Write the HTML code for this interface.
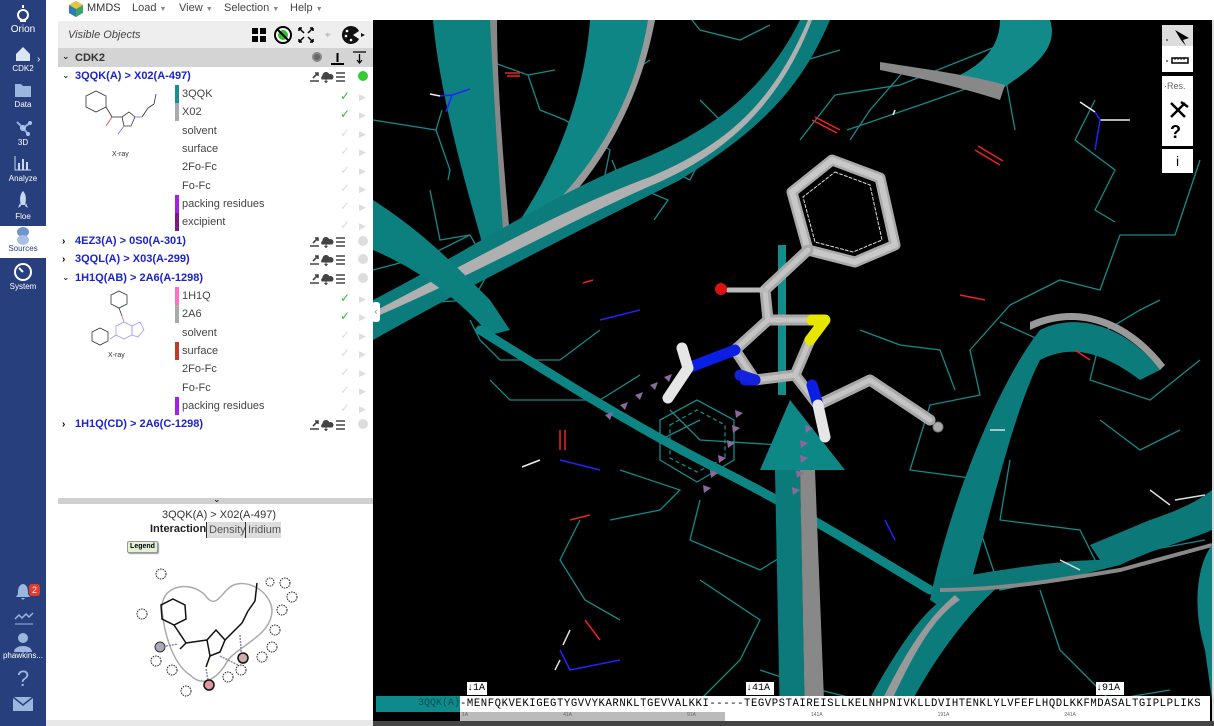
<!DOCTYPE html>
<html><head><meta charset="utf-8"><style>
*{margin:0;padding:0;box-sizing:border-box}
body{width:1214px;height:726px;overflow:hidden;background:#fff;font-family:"Liberation Sans",sans-serif;position:relative}
.a{position:absolute;white-space:nowrap}
#side{left:0;top:0;width:46px;height:726px;background:#283f7d}
.si{position:absolute;left:0;width:46px;text-align:center;color:#fff;font-size:8px}
.hdr{font-size:11px;font-weight:bold;color:#1b22d0}
.sub{font-size:11px;color:#444}
.bar{position:absolute;left:175px;width:4px;height:18px}
.ck{color:#33bb33;font-size:12px}
.ckg{color:#ddd;font-size:12px}
.tri{color:#ddd;font-size:9px}
</style></head><body>
<div id="side" class="a">
 <div class="si" style="top:4px"><svg width="16" height="20" viewBox="0 0 16 20"><path d="M8 1 L8 4" stroke="#fff" stroke-width="2"/><circle cx="8" cy="11" r="5" fill="none" stroke="#fff" stroke-width="2"/><path d="M5 17 H11" stroke="#fff" stroke-width="2"/></svg><div style="font-size:10px;margin-top:-2px">Orion</div></div>
 <div class="si" style="top:46px"><svg width="18" height="16"><path d="M2 8 L9 1 L16 8 V15 H2Z" fill="#dbe6f5"/></svg><div>CDK2</div></div>
 <div class="a" style="left:37px;top:54px;color:#fff;font-size:10px">›</div>
 <div class="si" style="top:82px"><svg width="18" height="16"><path d="M1 2 H7 L9 4 H17 V15 H1Z" fill="#9bb7e0"/></svg><div>Data</div></div>
 <div class="si" style="top:118px"><svg width="20" height="18"><line x1="4" y1="4" x2="10" y2="10" stroke="#8fb0e0" stroke-width="2"/><line x1="10" y1="10" x2="17" y2="5" stroke="#8fb0e0" stroke-width="2"/><line x1="10" y1="10" x2="15" y2="16" stroke="#8fb0e0" stroke-width="2"/><circle cx="10" cy="10" r="3" fill="#a8c4ea"/><circle cx="17" cy="5" r="2" fill="#a8c4ea"/><circle cx="15" cy="16" r="2" fill="#a8c4ea"/></svg><div>3D</div></div>
 <div class="si" style="top:154px"><svg width="20" height="18"><path d="M2 2 V16 H18" stroke="#c8d8f0" fill="none"/><rect x="5" y="9" width="2" height="7" fill="#c8d8f0"/><rect x="9" y="5" width="2" height="11" fill="#c8d8f0"/><rect x="13" y="8" width="2" height="8" fill="#c8d8f0"/></svg><div>Analyze</div></div>
 <div class="si" style="top:190px"><svg width="14" height="20"><path d="M7 1 C11 5 10 12 9 15 H5 C4 12 3 5 7 1Z M4 13 L2 18 L5 16Z M10 13 L12 18 L9 16Z" fill="#c8d8f0"/></svg><div>Floe</div></div>
 <div class="si" style="top:226px;height:32px;background:#fff;color:#2a3f7e"><svg width="16" height="20"><ellipse cx="8" cy="6" rx="6" ry="5" fill="#6f94cf"/><ellipse cx="8" cy="14" rx="6" ry="5" fill="#a9c0e4"/></svg><div style="margin-top:-4px">Sources</div></div>
 <div class="si" style="top:262px"><svg width="20" height="20"><circle cx="10" cy="10" r="8" fill="none" stroke="#fff" stroke-width="2"/><line x1="10" y1="10" x2="6" y2="6" stroke="#fff" stroke-width="2"/></svg><div style="margin-top:-2px">System</div></div>
 <div class="a" style="left:14px;top:583px"><svg width="18" height="18"><path d="M9 1 C4 2 4 7 4 11 L2 14 H16 L14 11 C14 7 14 2 9 1Z M7 15 H11 L9 17Z" fill="#9bb7e0"/></svg></div>
 <div class="a" style="left:29px;top:584px;width:11px;height:12px;background:#e8392a;border-radius:3px;color:#fff;font-size:9px;text-align:center;line-height:12px">2</div>
 <div class="a" style="left:14px;top:611px"><svg width="20" height="14"><path d="M1 8 L5 4 L8 7 L12 3 L15 6 L19 2" stroke="#9bb7e0" fill="none" stroke-width="1.5"/><line x1="1" y1="13" x2="19" y2="13" stroke="#9bb7e0"/></svg></div>
 <div class="si" style="top:632px"><svg width="20" height="20"><circle cx="10" cy="6" r="5" fill="#9bb7e0"/><path d="M1 20 C1 12 19 12 19 20Z" fill="#9bb7e0"/></svg><div style="margin-top:-3px">phawkins...</div></div>
 <div class="si" style="top:666px;font-size:22px;color:#9bb7e0">?</div>
 <div class="a" style="left:13px;top:697px"><svg width="20" height="14"><rect width="20" height="14" fill="#9bb7e0"/><path d="M0 0 L10 8 L20 0" stroke="#283f7d" fill="none" stroke-width="1.5"/></svg></div>
</div>
<!-- menu -->
<div class="a" style="left:68px;top:1px"><svg width="16" height="16"><polygon points="8,0 15,4 15,12 8,16 1,12 1,4" fill="#3aa56b"/><polygon points="8,0 15,4 8,8 1,4" fill="#e6c43a"/><polygon points="1,4 8,8 8,16 1,12" fill="#2c7db3"/></svg></div>
<div class="a" style="left:87px;top:2px;font-size:11px;color:#333">MMDS</div>
<div class="a" style="left:132px;top:2px;font-size:11px;color:#444">Load <span style="font-size:7px;color:#888">▼</span></div>
<div class="a" style="left:179px;top:2px;font-size:11px;color:#444">View <span style="font-size:7px;color:#888">▼</span></div>
<div class="a" style="left:224px;top:2px;font-size:11px;color:#444">Selection <span style="font-size:7px;color:#888">▼</span></div>
<div class="a" style="left:290px;top:2px;font-size:11px;color:#444">Help <span style="font-size:7px;color:#888">▼</span></div>
<!-- panel header -->
<div class="a" style="left:58px;top:21px;width:315px;height:27px;background:#eeeeee"></div>
<div class="a" style="left:68px;top:29px;font-size:11px;font-style:italic;color:#444">Visible Objects</div>
<div class="a" style="left:252px;top:28px"><svg width="14" height="14"><rect x="0" y="0" width="6" height="6"/><rect x="8" y="0" width="6" height="6"/><rect x="0" y="8" width="6" height="6"/><rect x="8" y="8" width="6" height="6"/></svg></div>
<div class="a" style="left:274px;top:26px"><svg width="18" height="18"><circle cx="9" cy="9" r="8" fill="#fff" stroke="#000" stroke-width="2"/><circle cx="9" cy="9" r="5" fill="#3b3"/><line x1="3" y1="3" x2="15" y2="15" stroke="#000" stroke-width="2"/></svg></div>
<div class="a" style="left:298px;top:27px"><svg width="16" height="16" stroke="#000" stroke-width="1.5" fill="none"><path d="M1 1 L6 6 M15 1 L10 6 M1 15 L6 10 M15 15 L10 10 M1 1 H4 M1 1 V4 M15 1 H12 M15 1 V4 M1 15 H4 M1 15 V12 M15 15 H12 M15 15 V12"/></svg></div>
<div class="a" style="left:325px;top:30px;color:#aaa;font-size:10px">⌖</div>
<div class="a" style="left:341px;top:25px"><svg width="26" height="20"><path d="M10 1 A9 9 0 1 0 18 14 L12 10 L18 6 A9 9 0 0 0 10 1Z" fill="#111"/><circle cx="6" cy="6" r="1.3" fill="#fff"/><circle cx="5" cy="11" r="1.3" fill="#fff"/><circle cx="10" cy="15" r="1.3" fill="#fff"/><path d="M20 8 L24 10 L20 12Z" fill="#111"/></svg></div>
<div class="a" style="left:58px;top:48px;width:315px;height:19px;background:#d4d4d4"></div>
<div class="a" style="left:62px;top:51px;font-size:9px">⌄</div>
<div class="a" style="left:75px;top:52px;font-size:11px;font-weight:bold;color:#333">CDK2</div>
<div class="a" style="left:312px;top:52px;width:10px;height:10px;border-radius:50%;background:#666;border:2px solid #888"></div>
<svg class="a" style="left:330px;top:50px" width="38" height="16" stroke="#000" stroke-width="2"><path d="M1 14 H14 M7.5 12 V3"/><path d="M23 2 H36 M29.5 4 V13 M27 10 L29.5 13 L32 10" fill="none" stroke-width="1.3"/></svg>

<!-- headers -->
<div class="a" style="left:62px;top:70px;font-size:9px">⌄</div><div class="a hdr" style="left:75px;top:70px">3QQK(A) &gt; X02(A-497)</div>
<div class="a" style="left:62px;top:236px;font-size:10px;font-weight:bold">›</div><div class="a hdr" style="left:75px;top:235px">4EZ3(A) &gt; 0S0(A-301)</div>
<div class="a" style="left:62px;top:254px;font-size:10px;font-weight:bold">›</div><div class="a hdr" style="left:75px;top:253px">3QQL(A) &gt; X03(A-299)</div>
<div class="a" style="left:62px;top:272px;font-size:9px">⌄</div><div class="a hdr" style="left:75px;top:272px">1H1Q(AB) &gt; 2A6(A-1298)</div>
<div class="a" style="left:62px;top:419px;font-size:10px;font-weight:bold">›</div><div class="a hdr" style="left:75px;top:418px">1H1Q(CD) &gt; 2A6(C-1298)</div>
<!-- header icons -->
<svg width="0" height="0" style="position:absolute"><defs><g id="hi"><path d="M1 11 H10 M4 8 L9 3 M6 3 H9 V6" stroke="#444" stroke-width="1.6" fill="none"/><path d="M14 6 A3 3 0 0 1 20 5 A2.5 2.5 0 0 1 23 9 H13 A2 2 0 0 1 14 6Z M17 9 V12 M15.5 11 L17 12.5 L18.5 11" fill="#444" stroke="#444"/><path d="M27 3 H36 M27 7 H36 M27 11 H36" stroke="#444" stroke-width="1.6"/></g></defs></svg>
<svg class="a" style="left:309px;top:70px" width="38" height="14"><use href="#hi"/></svg>
<div class="a" style="left:358px;top:71px;width:10px;height:10px;border-radius:50%;background:#3c3"></div>
<svg class="a" style="left:309px;top:235px" width="38" height="14"><use href="#hi"/></svg><div class="a" style="left:358px;top:236px;width:10px;height:10px;border-radius:50%;background:#ddd"></div>
<svg class="a" style="left:309px;top:253px" width="38" height="14"><use href="#hi"/></svg><div class="a" style="left:358px;top:254px;width:10px;height:10px;border-radius:50%;background:#ddd"></div>
<svg class="a" style="left:309px;top:272px" width="38" height="14"><use href="#hi"/></svg><div class="a" style="left:358px;top:273px;width:10px;height:10px;border-radius:50%;background:#ddd"></div>
<svg class="a" style="left:309px;top:418px" width="38" height="14"><use href="#hi"/></svg><div class="a" style="left:358px;top:419px;width:10px;height:10px;border-radius:50%;background:#ddd"></div>

<!-- sub rows 3QQK -->
<div class="bar" style="top:85px;background:#1b8d8b"></div><div class="bar" style="top:103px;background:#aaa"></div>
<div class="bar" style="top:195px;background:#a020f0"></div><div class="bar" style="top:213px;background:#7a1a7a"></div>
<div class="a sub" style="left:182px;top:88px">3QQK</div>
<div class="a sub" style="left:182px;top:106px">X02</div>
<div class="a sub" style="left:182px;top:125px">solvent</div>
<div class="a sub" style="left:182px;top:143px">surface</div>
<div class="a sub" style="left:182px;top:161px">2Fo-Fc</div>
<div class="a sub" style="left:182px;top:180px">Fo-Fc</div>
<div class="a sub" style="left:182px;top:198px">packing residues</div>
<div class="a sub" style="left:182px;top:216px">excipient</div>
<div class="a" style="left:340px;top:87px;line-height:18.4px;text-align:center;width:10px"><span class="ck">✓</span><br><span class="ck">✓</span><br><span class="ckg">✓</span><br><span class="ckg">✓</span><br><span class="ckg">✓</span><br><span class="ckg">✓</span><br><span class="ckg">✓</span><br><span class="ckg">✓</span></div>
<div class="a tri" style="left:359px;top:88px;line-height:18.4px">▶<br>▶<br>▶<br>▶<br>▶<br>▶<br>▶<br>▶</div>
<!-- sub rows 1H1Q -->
<div class="bar" style="top:287px;background:#ff6ec7"></div><div class="bar" style="top:305px;background:#aaa"></div>
<div class="bar" style="top:342px;background:#c0392b"></div><div class="bar" style="top:397px;background:#a020f0"></div>
<div class="a sub" style="left:182px;top:290px">1H1Q</div>
<div class="a sub" style="left:182px;top:308px">2A6</div>
<div class="a sub" style="left:182px;top:327px">solvent</div>
<div class="a sub" style="left:182px;top:345px">surface</div>
<div class="a sub" style="left:182px;top:363px">2Fo-Fc</div>
<div class="a sub" style="left:182px;top:382px">Fo-Fc</div>
<div class="a sub" style="left:182px;top:400px">packing residues</div>
<div class="a" style="left:340px;top:289px;line-height:18.4px;text-align:center;width:10px"><span class="ck">✓</span><br><span class="ck">✓</span><br><span class="ckg">✓</span><br><span class="ckg">✓</span><br><span class="ckg">✓</span><br><span class="ckg">✓</span><br><span class="ckg">✓</span></div>
<div class="a tri" style="left:359px;top:290px;line-height:18.4px">▶<br>▶<br>▶<br>▶<br>▶<br>▶<br>▶</div>
<!-- 2D structures -->
<svg class="a" style="left:80px;top:86px" width="80" height="75" stroke="#333" fill="none" stroke-width="0.8">
 <polygon points="16,5 26,10 26,21 16,26 6,21 6,10"/><line x1="26" y1="21" x2="32" y2="31"/><line x1="32" y1="31" x2="26" y2="40" stroke="#f33"/><line x1="32" y1="31" x2="42" y2="31"/>
 <polygon points="42,31 49,26 55,31 51,40 44,40"/><line x1="55" y1="31" x2="62" y2="31" stroke="#66f"/><line x1="62" y1="31" x2="68" y2="22"/><line x1="68" y1="22" x2="74" y2="18"/><line x1="74" y1="18" x2="76" y2="8"/><line x1="44" y1="40" x2="38" y2="48" stroke="#66f"/>
 <text x="32" y="70" font-size="7" fill="#333" stroke="none" font-family="Liberation Sans">X-ray</text></svg>
<svg class="a" style="left:88px;top:288px" width="70" height="72" stroke="#333" fill="none" stroke-width="0.8">
 <polygon points="31,3 39,7 39,16 31,20 23,16 23,7"/><line x1="31" y1="20" x2="34" y2="28"/><line x1="34" y1="28" x2="36" y2="34" stroke="#f66"/>
 <polygon points="36,34 44,38 44,47 36,51 28,47 28,38" stroke="#99f"/><polygon points="44,38 52,34 56,42 50,49 44,47" stroke="#99f"/><line x1="28" y1="47" x2="22" y2="51" stroke="#99f"/>
 <polygon points="12,40 20,44 20,53 12,57 4,53 4,44"/>
 <text x="20" y="69" font-size="7" fill="#333" stroke="none" font-family="Liberation Sans">X-ray</text></svg>

<!-- collapse bar -->
<div class="a" style="left:58px;top:498px;width:315px;height:6px;background:#d0d0d0"></div>
<div class="a" style="left:213px;top:494px;font-size:9px">⌄</div>
<div class="a" style="left:162px;top:509px;font-size:11px;color:#333">3QQK(A) &gt; X02(A-497)</div>
<div class="a" style="left:150px;top:523px;font-size:11px;font-weight:bold;color:#222">Interaction</div>
<div class="a" style="left:206px;top:522px;width:75px;height:16px;background:#ddd"></div>
<div class="a" style="left:206px;top:522px;height:16px;border-left:1px solid #333;padding-left:2px;font-size:11px;color:#555;line-height:16px">Density</div>
<div class="a" style="left:245px;top:522px;height:16px;border-left:1px solid #333;padding-left:2px;font-size:11px;color:#555;line-height:16px">Iridium</div>
<div class="a" style="left:127px;top:541px;width:31px;height:12px;background:#e3f0d8;border:1px solid #999;border-radius:2px;font-size:7px;font-weight:bold;text-align:center;line-height:10px;box-shadow:1px 1px 1px #999">Legend</div>
<!-- interaction diagram -->
<svg class="a" style="left:130px;top:565px" width="180" height="135" fill="none">
 <path d="M32 45 C30 20 60 15 75 30 C85 45 90 30 100 22 C115 12 140 25 142 45 C142 70 110 80 98 95 C90 110 75 125 60 110 C45 100 35 75 32 45Z" stroke="#aaa" stroke-width="1.5"/>
 <g stroke="#111" stroke-width="1.5"><polygon points="43,34 55,40 56,54 44,60 32,54 31,40"/><line x1="44" y1="60" x2="56" y2="78"/><line x1="56" y1="78" x2="50" y2="84"/><line x1="56" y1="78" x2="77" y2="75"/>
 <polygon points="77,75 86,65 95,75 90,87 80,91"/><line x1="95" y1="75" x2="112" y2="58"/><line x1="112" y1="58" x2="118" y2="46"/><line x1="118" y1="46" x2="125" y2="36"/><line x1="125" y1="36" x2="127" y2="18"/><line x1="80" y1="91" x2="76" y2="102"/></g>
 <path d="M30 82 L48 79 M90 91 L112 102 M76 104 L79 120 M110 70 L112 98" stroke="#88a" stroke-dasharray="2 1" stroke-width="1.5"/>
 <g stroke="#222" stroke-dasharray="1.5 1" fill="#fff"><circle cx="31" cy="9" r="5"/><circle cx="12" cy="49" r="5"/><circle cx="26" cy="96" r="5"/><circle cx="42" cy="105" r="5"/><circle cx="56" cy="126" r="5"/><circle cx="98" cy="112" r="5"/><circle cx="111" cy="105" r="5"/><circle cx="132" cy="92" r="5"/><circle cx="142" cy="82" r="5"/><circle cx="155" cy="18" r="5"/><circle cx="162" cy="32" r="5"/><circle cx="152" cy="45" r="5"/><circle cx="145" cy="65" r="5"/><circle cx="140" cy="17" r="4"/></g>
 <circle cx="30" cy="82" r="5" fill="#aab" stroke="#333"/><circle cx="79" cy="120" r="5" fill="#d99" stroke="#111" stroke-width="1.5"/><circle cx="113" cy="93" r="5" fill="#caa" stroke="#111" stroke-width="1.5"/>
</svg>
<div class="a" style="left:46px;top:720px;width:327px;height:6px;background:#e8e8e8"></div>

<!-- viewer -->
<div class="a" style="left:373px;top:20px;width:841px;height:706px;background:#000;overflow:hidden">
<svg width="841" height="706" viewBox="373 20 841 706">
 <g stroke="#148a8a" stroke-width="1.3" fill="none">
  <path d="M440 20 L445 45 L528 75 L540 110 L565 120 L610 150 L598 210 M528 75 L555 70"/>
  <path d="M373 120 L436 130 L442 110 M436 130 L450 170 L448 180"/>
  <path d="M430 190 L440 240 L470 235 L490 270 L473 300 L380 305"/>
  <path d="M470 235 L430 255 L373 270"/>
  <path d="M620 180 L668 200 L654 220 M620 180 L612 160"/>
  <path d="M650 60 L620 80 L610 75"/>
  <path d="M680 5 L700 30 L740 40 L770 25"/>
  <path d="M700 100 L720 120 L690 180 L680 175"/>
  <path d="M800 140 L835 95 L900 85 L1000 45"/>
  <path d="M840 50 L790 65"/>
  <path d="M905 70 L870 110 L850 140"/>
  <path d="M847 130 L920 105 L1005 75 L1015 130"/>
  <path d="M1095 100 L1075 140 L1115 170 L1095 210 L1115 222"/>
  <path d="M1200 160 L1175 235 L1120 235 L1100 290 L1060 280 L1010 305 L970 350 L980 395 L930 405 L910 470 L985 480"/>
  <path d="M1000 322 L1040 340 L1090 340 L1140 310 L1160 300"/>
  <path d="M1100 340 L1090 380 L1150 400 L1200 360"/>
  <path d="M860 330 L900 345 L940 350 L955 390"/>
  <path d="M670 410 L700 440 L780 445 L790 420"/>
  <path d="M620 470 L680 490 L660 510 L610 520"/>
  <path d="M700 500 L690 540 L760 570 L800 545"/>
  <path d="M470 320 L480 340 L500 360 L560 360 L600 330"/>
  <path d="M490 380 L510 400 L600 400 L640 375"/>
  <path d="M600 400 L620 420 L660 440 L700 420"/>
  <path d="M580 520 L560 560 L585 600 L620 620"/>
  <path d="M700 580 L760 620 L740 660 L700 700"/>
  <path d="M760 670 L820 690 L860 700"/>
  <path d="M1010 460 L1000 520 L1080 530 L1100 570"/>
  <path d="M1040 590 L1060 650 L1110 700 L1170 690"/>
  <path d="M980 530 L1000 590 L1050 580"/>
  <path d="M1120 560 L1150 550 L1205 540"/>
  <path d="M1100 420 L1140 450 L1180 430"/>
  <polygon points="660,420 697,400 734,420 734,460 697,482 660,460"/>
  <polygon points="670,425 697,410 725,425 725,458 697,472 670,458" stroke-dasharray="4 3"/>
 </g>
 <!-- ribbons -->
 <path d="M433 20 L495 20 C495 100 505 200 512 260 L490 270 C470 200 440 100 433 20Z" fill="#0d8080"/>
 <path d="M490 20 L497 20 C497 100 507 200 512 260 L506 263 C500 200 494 100 490 20Z" fill="#888"/>
 <path d="M590 20 L655 20 C640 90 600 170 530 230 L520 220 C560 160 585 90 590 20Z" fill="#0e8686"/>
 <path d="M648 20 L655 20 C642 90 608 170 535 233 L530 228 C595 170 635 100 648 20Z" fill="#999"/>
 <path d="M373 300 C470 250 560 190 640 160 C700 135 760 100 800 20 L830 20 C800 90 760 130 680 180 C600 220 480 280 373 340Z" fill="#0b7b7b"/>
 <path d="M373 312 C470 262 560 210 650 177 C720 147 770 110 808 20 L812 20 C778 110 718 158 650 186 C560 226 480 272 373 318Z" fill="#b0b0b0"/>
 <path d="M373 200 C420 230 450 260 490 300 L510 330 L490 335 C460 300 420 270 373 250Z" fill="#0c7f7f"/>
 <path d="M1000 20 L1050 20 C1060 50 1030 70 1000 90 L960 75 C990 60 1000 40 1000 20Z" fill="#138a8a"/>
 <path d="M880 70 C930 80 970 90 1000 100 L1005 85 C970 75 930 70 880 62Z" fill="#888"/>
 <path d="M480 330 C560 380 640 430 720 470 C800 510 880 560 930 590" stroke="#0e8585" stroke-width="9" fill="none" stroke-linecap="round"/>
 <path d="M930 600 C950 500 1000 380 1040 330 C1080 310 1130 330 1160 370 L1140 380 C1100 350 1070 345 1040 360 C1010 420 990 520 960 620Z" fill="#0b7b7b"/>
 <path d="M1030 330 C1080 305 1130 330 1160 370 L1165 365 C1130 320 1080 300 1030 322Z" fill="#999"/>
 <path d="M855 726 C900 640 930 600 960 590 L1000 585 C960 620 920 680 900 726Z" fill="#0b7b7b"/>
 <path d="M880 726 C910 660 930 620 960 600 L955 595 C925 620 900 660 870 726Z" fill="#999"/>
 <path d="M940 580 C1000 570 1060 560 1100 560 L1090 545 L1150 520 C1180 510 1200 500 1212 490 L1212 530 C1190 540 1150 550 1120 565 L1060 580 C1000 590 960 595 940 590Z" fill="#0d7878"/>
 <path d="M940 590 C1000 590 1060 580 1120 570 L1212 545" stroke="#888" stroke-width="4" fill="none"/>
 <path d="M790 400 L845 470 L760 470Z" fill="#0e8787"/>
 <path d="M775 470 L800 470 L805 726 L780 726Z" fill="#0c7a7a"/>
 <path d="M800 470 L815 470 L825 726 L805 726Z" fill="#888"/>
 <rect x="778" y="245" width="8" height="150" fill="#148c8c"/>
 <path d="M1205 650 C1190 600 1200 560 1212 545 L1212 700Z" fill="#0d8080"/>
 <!-- sticks small colored -->
 <g stroke-width="1.5">
  <path d="M439 96 L452 95 M452 95 L446 112 M452 95 L470 89" stroke="#22f"/><path d="M430 94 L440 96 M1080 102 L1095 112 M1100 120 L1130 120 M522 467 L540 460 M893 115 L895 110" stroke="#eee"/>
  <path d="M505 73 L520 73 M507 76 L520 76 M583 283 L593 280 M815 117 L840 130 M812 120 L837 133 M975 150 L1000 165 M978 146 L1003 161 M560 430 L560 450 M565 430 L565 450 M570 520 L590 515 M1090 360 L1075 350 M960 295 L985 300 M585 620 L600 640" stroke="#e22"/>
  <path d="M1095 112 L1100 120 L1095 150 M600 320 L640 310 M885 520 L895 540 M560 460 L600 470 M560 650 L570 670 L620 660" stroke="#22f"/>
  <path d="M1150 490 L1170 505 M1175 500 L1205 495 M1060 560 L1080 570 M990 430 L1005 430 M570 630 L563 645 M555 670 L560 660" stroke="#ddd"/>
 </g>
 <!-- ligand -->
 <g stroke-linecap="round" stroke-linejoin="round" fill="none">
  <polygon points="832,160 880,178 895,245 855,262 808,250 792,192" stroke="#aaa" stroke-width="11"/>
  <polygon points="832,160 880,178 895,245 855,262 808,250 792,192" stroke="#c8c8c8" stroke-width="6"/>
  <polygon points="835,172 870,185 882,240 853,252 815,242 803,197" stroke="#ddd" stroke-width="1" stroke-dasharray="3 2"/>
  <path d="M808 250 L765 290 L768 320 L812 320 M768 320 L735 350 L755 380 L795 375 L810 340 M795 375 L818 405 L870 380 L930 420" stroke="#a8a8a8" stroke-width="11"/>
  <path d="M808 250 L765 290 L768 320 L812 320 M768 320 L735 350 L755 380 L795 375 L810 340 M795 375 L818 405 L870 380 L930 420" stroke="#c4c4c4" stroke-width="5"/>
  <path d="M812 320 L825 320 L810 340" stroke="#e6e600" stroke-width="11"/>
  <path d="M765 290 L728 290" stroke="#bbb" stroke-width="5"/>
  <path d="M735 350 L688 368 M755 380 L745 380 M818 405 L812 385" stroke="#0a1ee6" stroke-width="11"/>
  <path d="M688 368 L682 348 M688 368 L668 398 M818 405 L825 437" stroke="#e6e6e6" stroke-width="11"/>
  <path d="M755 380 L740 375" stroke="#1422dd" stroke-width="11"/>
 </g>
 <circle cx="721" cy="289" r="6" fill="#e01010"/>
 <circle cx="938" cy="427" r="5" fill="#aaa" stroke="#777"/>
 <g fill="#8a6a9a"><path d="M605 415 l8 -3 l-3 8z"/><path d="M620 405 l8 -3 l-3 8z"/><path d="M635 395 l8 -3 l-3 8z"/><path d="M650 385 l8 -3 l-3 8z"/><path d="M664 377 l8 -3 l-3 8z"/><path d="M735 410 l8 3 l-7 5z"/><path d="M732 425 l8 3 l-7 5z"/><path d="M727 440 l8 3 l-7 5z"/><path d="M718 455 l8 3 l-7 5z"/><path d="M710 470 l8 3 l-7 5z"/><path d="M703 485 l8 3 l-7 5z"/><path d="M800 440 l8 3 l-7 5z"/><path d="M800 455 l8 3 l-7 5z"/><path d="M796 470 l8 3 l-7 5z"/><path d="M792 487 l8 3 l-7 5z"/><path d="M805 425 l8 3 l-7 5z"/></g>
</svg>
</div>
<div class="a" style="left:1212px;top:20px;width:2px;height:706px;background:#ddd"></div>
<div class="a" style="left:372px;top:302px;width:8px;height:20px;background:#fff;border-radius:3px;font-size:8px;color:#666;line-height:20px;text-align:center">‹</div>
<!-- right toolbar -->
<div class="a" style="left:1162px;top:25px;width:31px;height:47px;background:#fff"></div>
<div class="a" style="left:1162px;top:25px;width:31px;height:21px;background:#ddd"></div>
<svg class="a" style="left:1164px;top:27px" width="28" height="44"><path d="M11 3 L25 11 L19 13 L22 19 L17 13Z M11 3 L17 13" fill="#000"/><rect x="8" y="31" width="16" height="5" fill="none" stroke="#000" stroke-width="1.5"/><path d="M11 31 v2 M14 31 v2 M17 31 v2 M20 31 v2" stroke="#000"/><circle cx="3" cy="13" r="1" fill="#555"/><circle cx="3" cy="34" r="1" fill="#555"/></svg>
<div class="a" style="left:1162px;top:76px;width:31px;height:70px;background:#fff"></div>
<div class="a" style="left:1164px;top:81px;font-size:9px;color:#666">·Res.</div>
<svg class="a" style="left:1166px;top:100px" width="24" height="20"><path d="M5 3 L19 17 M19 3 L5 17 M15 2 L22 7" stroke="#000" stroke-width="2.5"/></svg>
<div class="a" style="left:1170px;top:122px;font-size:18px;font-weight:bold">?</div>
<div class="a" style="left:1162px;top:149px;width:31px;height:24px;background:#fff;text-align:center;font-size:14px;line-height:24px">i</div>
<!-- sequence -->
<div class="a" style="left:467px;top:682px;width:20px;height:13px;background:#fff;font-family:'Liberation Mono',monospace;font-size:10px;line-height:13px">↓1A</div>
<div class="a" style="left:746px;top:682px;width:28px;height:13px;background:#fff;font-family:'Liberation Mono',monospace;font-size:10px;line-height:13px">↓41A</div>
<div class="a" style="left:1096px;top:682px;width:28px;height:13px;background:#fff;font-family:'Liberation Mono',monospace;font-size:10px;line-height:13px">↓91A</div>
<div class="a" style="left:376px;top:696px;width:84px;height:16px;background:#0e8a8a;font-family:'Liberation Mono',monospace;font-size:10px;color:#0a4f4f;text-align:right;line-height:16px">3QQK(A)</div>
<div class="a" style="left:460px;top:696px;width:750px;height:16px;background:#fff;font-family:'Liberation Mono',monospace;font-size:10.6px;line-height:16px;letter-spacing:0.57px;overflow:hidden">-MENFQKVEKIGEGTYGVVYKARNKLTGEVVALKKI-----TEGVPSTAIREISLLKELNHPNIVKLLDVIHTENKLYLVFEFLHQDLKKFMDASALTGIPLPLIKS</div>
<div class="a" style="left:460px;top:712px;width:750px;height:9px;background:#fff"></div>
<div class="a" style="left:460px;top:712px;width:265px;height:9px;background:#bbb"></div>
<div class="a" style="left:462px;top:712px;font-size:5px;color:#666;word-spacing:0">1A<span style="margin-left:95px">41A</span><span style="margin-left:115px">91A</span><span style="margin-left:115px">141A</span><span style="margin-left:115px">191A</span><span style="margin-left:115px">241A</span></div>
<div class="a" style="left:373px;top:721px;width:841px;height:5px;background:#444"></div>
</body></html>
